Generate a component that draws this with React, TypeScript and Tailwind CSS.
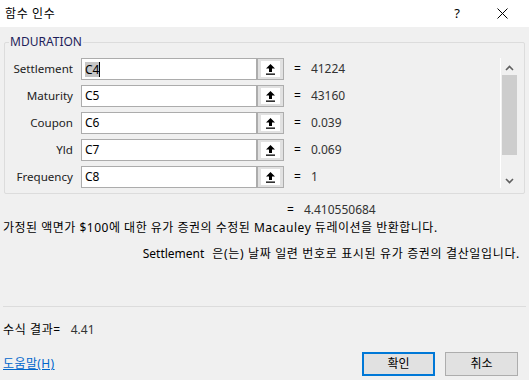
import React from "react";

const font = { fontFamily: '"Noto Sans", "Noto Sans CJK KR", sans-serif' };

const rows = [
    { label: "Settlement", ref: "C4", value: "41224" },
    { label: "Maturity", ref: "C5", value: "43160" },
    { label: "Coupon", ref: "C6", value: "0.039" },
    { label: "Yld", ref: "C7", value: "0.069" },
    { label: "Frequency", ref: "C8", value: "1" },
];

function RefButton() {
    return (
        <div className="w-[27px] h-[22px] border border-[#adadad] bg-[#e1e1e1] flex items-center justify-center">
            <div className="w-[19px] h-[16px] bg-white flex items-center justify-center">
                <svg width="11" height="12" viewBox="0 0 11 12">
                    <path d="M5.5 1 L10 5.5 L7 5.5 L7 9 L4 9 L4 5.5 L1 5.5 Z" fill="#000" />
                    <rect x="1" y="10.5" width="9" height="1.3" fill="#000" />
                </svg>
            </div>
        </div>
    );
}

export default function App() {
    return (
        <div className="w-[529px] h-[380px] bg-[#f0f0f0] text-[12px] text-black overflow-hidden flex flex-col" style={font}>
            {/* title bar */}
            <div className="h-[27px] bg-white flex items-center shrink-0">
                <span className="pl-[5px] text-[12px] tracking-[0.6px]">함수 인수</span>
                <span className="ml-auto mr-[37px] text-[13px]">?</span>
                <svg width="11" height="11" viewBox="0 0 11 11" className="mr-[21px]">
                    <path d="M0.5 0.5 L10.5 10.5 M10.5 0.5 L0.5 10.5" stroke="#000" strokeWidth="1" />
                </svg>
            </div>

            {/* group box */}
            <div className="relative mx-[4px] mt-[15px] h-[152px] border border-[#dcdcdc] rounded-[2px] shrink-0">
                <span className="absolute left-[4px] top-[-9px] px-[1px] bg-[#f0f0f0] leading-[16px] text-[12px] text-[#1e1e5a]">MDURATION</span>
                <div className="flex pt-[15px]">
                    <div className="flex flex-col gap-[5px]">
                        {rows.map((r, i) => (
                            <div key={r.label} className="flex items-center h-[22px]">
                                <span className="w-[68px] text-right text-[11.6px] text-[#222]">{r.label}</span>
                                <div className="ml-[8px] w-[176px] h-[22px] bg-white border border-[#acacac] flex items-center pl-[3px]">
                                    {i === 0 ? (
                                        <>
                                            <span className="bg-[#c6c6c6] leading-[15px]">C4</span>
                                            <span className="w-[1px] h-[15px] bg-black" />
                                        </>
                                    ) : (
                                        <span>{r.ref}</span>
                                    )}
                                </div>
                                <RefButton />
                                <span className="ml-[10px]">=</span>
                                <span className="ml-[10px] text-[#333]">{r.value}</span>
                            </div>
                        ))}
                    </div>
                    {/* scrollbar */}
                    <div className="ml-auto mr-[7px] w-[17px] h-[130px] border-l border-white flex flex-col items-center">
                        <svg width="9" height="6" viewBox="0 0 9 6" className="mt-[7px]">
                            <path d="M1 5 L4.5 1.5 L8 5" stroke="#606060" strokeWidth="1.6" fill="none" />
                        </svg>
                        <div className="mt-[4px] w-[15px] h-[80px] bg-[#cdcdcd]" />
                        <svg width="9" height="6" viewBox="0 0 9 6" className="mt-[23px]">
                            <path d="M1 1 L4.5 4.5 L8 1" stroke="#606060" strokeWidth="1.6" fill="none" />
                        </svg>
                    </div>
                </div>
            </div>

            <div className="flex h-[17px] mt-[7px] items-center pl-[287px] shrink-0">
                <span>=</span>
                <span className="ml-[10px] text-[#333]">4.410550684</span>
            </div>
            <div className="pl-[3px] mt-[1px] h-[18px] leading-[18px] tracking-[0.5px] shrink-0">가정된 액면가 $100에 대한 유가 증권의 수정된 Macauley 듀레이션을 반환합니다.</div>
            <div className="flex justify-end pr-[9px] mt-[8px] h-[18px] leading-[18px] shrink-0">
                <span>Settlement</span>
                <span className="ml-[8px] tracking-[0.65px]">은(는) 날짜 일련 번호로 표시된 유가 증권의 결산일입니다.</span>
            </div>

            <div className="mx-[3px] mt-[43px] h-px bg-[#dcdcdc] shrink-0" />

            <div className="pl-[3px] mt-[14px] h-[18px] leading-[18px] shrink-0">
                <span className="tracking-[0.6px]">수식 결과=</span>
                <span className="ml-[10px] text-[#333]">4.41</span>
            </div>

            <div className="flex items-center mt-[13px] shrink-0">
                <span className="pl-[3px] text-[#0066cc] underline tracking-[0.4px]">도움말(H)</span>
                <button className="ml-auto w-[73px] h-[24px] border-2 border-[#0078d7] bg-[#e1e1e1] text-[12px]">확인</button>
                <button className="ml-[10px] mr-[11px] w-[73px] h-[24px] border border-[#adadad] bg-[#e1e1e1] text-[12px]">취소</button>
            </div>
        </div>
    );
}
